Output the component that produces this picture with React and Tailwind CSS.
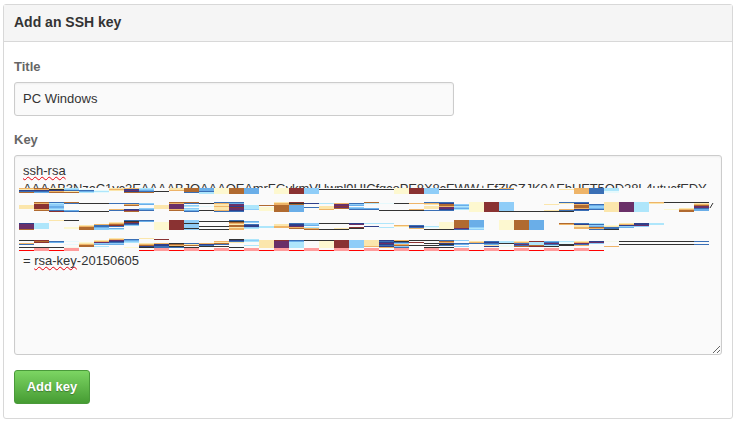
import React from 'react';

// Colours of the redaction stripes, one letter per colour ('.' leaves a gap)
const palette = {
    k: '#333333', n: '#2f3f8a', b: '#3a6fb5', s: '#6aaee8', l: '#8fcdf8', c: '#aee6fb',
    w: '#e6f9fc', y: '#fdf8d0', f: '#fbe6ac', t: '#eeb468', o: '#b06a30', r: '#8a3232',
    p: '#6a3068', e: '#ff0000', m: '#ff9c9c', g: '#f4f8ea',
};

// Each string is one 15px cell, each letter one pixel row
const rows = [
    {
        y: 0,
        cells: ['tfnbo', 'otnbs', 'fknto', 'clbfo', '.wbsc', '..wcw', 'ftf', 'tnpno', 'clsbo', '...k', 'fft', 'oooob',
            'sssbcc', 'yyyyyy', 'oooooo', 'ssssss', '', 'yyyyyy', 'rrrrrr', 'llllll', '.k', '.k', '.k', '.k', '.k',
            'yyyyyy', 'rrrrrr', 'llllll', '.k', '.k', '.k', '.k', 'tb', '', '', '', '.f', 'tttttt', 'bbbbbb', 'cccww'],
    },
    {
        y: 14,
        cells: ['...ffff', 'otrrrrrto', 'bcllsslcbr', 'ob......sb', '.k.......k', '.k.......k', '.b.....tb', '.bto...npo',
            '.ls...lsb', '...ffff', 'otpppppto', 'ob.lc.lcsb', '.k..w...k', 'btfftffftb', 'bsppnrppnb', '...ccccl',
            '...o.yyyy', 'fttooooooo', 'rkosssssss', '.n...b', '.c..ffft', '.tpprpo', '.bls.lsb', 'oc....sb',
            '.w......k', '.k......k', '.t.....tk', 'btf.fff.b', 'bnootppnb', '..lsclsc', 'yyyyyyyyyy', 'rrrrrrrrrr',
            'lllllllllk', '.........k', '.........k', '..f.....fk', 'bf.....tbk', 'bntoootnb', '..bsllsb',
            'ffffffffff', 'pppppppppp', 'cccccccccc', 'tf', 'k......y', 'k.....ftoo', 'kftoppbss'],
    },
    {
        y: 32,
        cells: ['...npppppo', '...cccccc', 'f', 'k......yy', '.....ftooo', '....tbbsll', '..ftorb.sc', 'bkrnbl', 'bs',
            '..yyyyyyyy', 'rrrrrrrrrr', 'lllkllllkl', '.k....k..k', '.k....k..k', 'bkotfooftt', '.sl.bnnlc', '......cc',
            '....fftt', '...bnnpto', '...lls.cto', '...k.....k', '...k....fk', '...np..rk', '...c..n', '...c...c',
            '.....tf', '.....bnbt', '......cw.k', '..yyyyyyyk', 'oooooooopb', 'ssssssslcl', '', 'yyyyyyyyyy',
            'oooooooooo', 'ssssssssss', '', '...ot', '...bnfftt', '...cblsotb', '.....yfbbk', '...ftnls', '...nnpl', '...cc'],
    },
    {
        y: 50,
        cells: ['..k..tb..k', '..ror....k', '...bs....k', '...w..w..g', '....yftoo', '..ftpls.c', 'ftpnbls', '.bslc....y',
            'f....ftonk', '.r...tnnbb', '.....kotkb', '.....bfo.k', '.....tnbk', '...tfob.k', '.knbf....k', '.clc...c',
            '..ffffffff', '..rppppppp', '..bscccccc', '..k', '..kyyyyyyy', '..rrrrrrrr', '..llllllll', '..fffffft',
            '..nbnpnbnt', '..tkbltolb', '..k.r..k', '..k..k.k.k', '..botnkb.k', '..l..bs.l', '...ftb', '...bnbsfn',
            '...cck.wg', '...ftbpbo', '...rcccor', '...sbpbck', '...cwwkk', '...ftpbt', '...npl', '...g....t',
            '...k..k', '...k..k', '...k..k', '...k..k', '...k..k', '...b..b'],
    },
];

// Red and pink marks under the last stripe row, alternating per cell
const lastRowMarks = Array.from({ length: 39 }, (_, i) => i).filter((i) => i < 4 || i > 7);

const RedactedLines = () => {
    return (
        <svg className="block" width="700" height="64" shapeRendering="crispEdges">
            {rows.map((row) =>
                row.cells.map((cell, col) =>
                    cell.split('').map((ch, i) =>
                        ch === '.' ? null : (
                            <rect key={`${row.y}-${col}-${i}`} x={col * 15} y={row.y + i} width="15" height="1" fill={palette[ch]} />
                        )
                    )
                )
            )}
            {lastRowMarks.map((i) =>
                i % 2 === 0 ? (
                    <rect key={i} x={i * 15} y="62" width="15" height="1" fill={palette.e} />
                ) : (
                    <rect key={i} x={i * 15} y="60" width="15" height="3" fill={palette.m} />
                )
            )}
            <line x1="694" y1="15" x2="691" y2="20" stroke="#333333" shapeRendering="auto" />
        </svg>
    );
};

const App = () => {
    return (
        <div className="h-[422px] w-[737px] overflow-hidden bg-white px-[3px] pt-1 font-['Liberation_Sans',Arial,sans-serif] text-[13px] text-[#333]">
            <div className="h-[415px] w-[730px] rounded-[3px] border border-[#d8d8d8]">
                {/* Panel header */}
                <div className="h-[37px] border-b border-[#d8d8d8] bg-[#f5f5f5] px-[10px] text-sm leading-[35px] font-bold">
                    Add an SSH key
                </div>

                {/* Form */}
                <div className="px-[10px] pt-[15px]">
                    <div className="mb-[5px] h-5 leading-5 font-bold text-[#666]">Title</div>
                    <div className="h-[34px] w-[440px] rounded-[3px] border border-[#ccc] bg-[#fafafa] px-2 leading-8 shadow-[inset_0_1px_2px_rgba(0,0,0,0.05)]">
                        PC Windows
                    </div>

                    <div className="mt-[14px] mb-[5px] h-5 leading-5 font-bold text-[#666]">Key</div>
                    {/* Key textarea, the key itself is blacked out in stripes */}
                    <div className="h-[200px] w-[708px] resize overflow-auto rounded-[3px] border border-[#ccc] bg-[#fafafa] pt-[6px] pl-1 leading-[18px] shadow-[inset_0_1px_2px_rgba(0,0,0,0.05)]">
                        <div className="pl-1">
                            <span className="underline decoration-red-600 decoration-wavy decoration-1 [text-decoration-skip-ink:none]">ssh-rsa</span>
                        </div>
                        <div className="h-2 overflow-hidden pl-1 tracking-[-0.1px] whitespace-nowrap">
                            AAAAB3NzaC1yc2EAAAABJQAAAQEAmrFGvkmVHwpl9HICfqcoPE8X8cEWW+FfZlCZJK0AEbUET5OD28L4utucfEDY
                        </div>
                        <RedactedLines />
                        <div className="pl-1">
                            ={' '}
                            <span className="underline decoration-red-600 decoration-wavy decoration-1 [text-decoration-skip-ink:none]">rsa-key</span>
                            -20150605
                        </div>
                    </div>

                    <button className="mt-[15px] h-[34px] w-[76px] rounded-[3px] border border-[#4a9a3a] bg-linear-to-b from-[#7cd563] to-[#469c33] text-center font-bold text-white [text-shadow:0_1px_1px_rgba(0,0,0,0.3)]">
                        Add key
                    </button>
                </div>
            </div>
        </div>
    );
};

export default App;
